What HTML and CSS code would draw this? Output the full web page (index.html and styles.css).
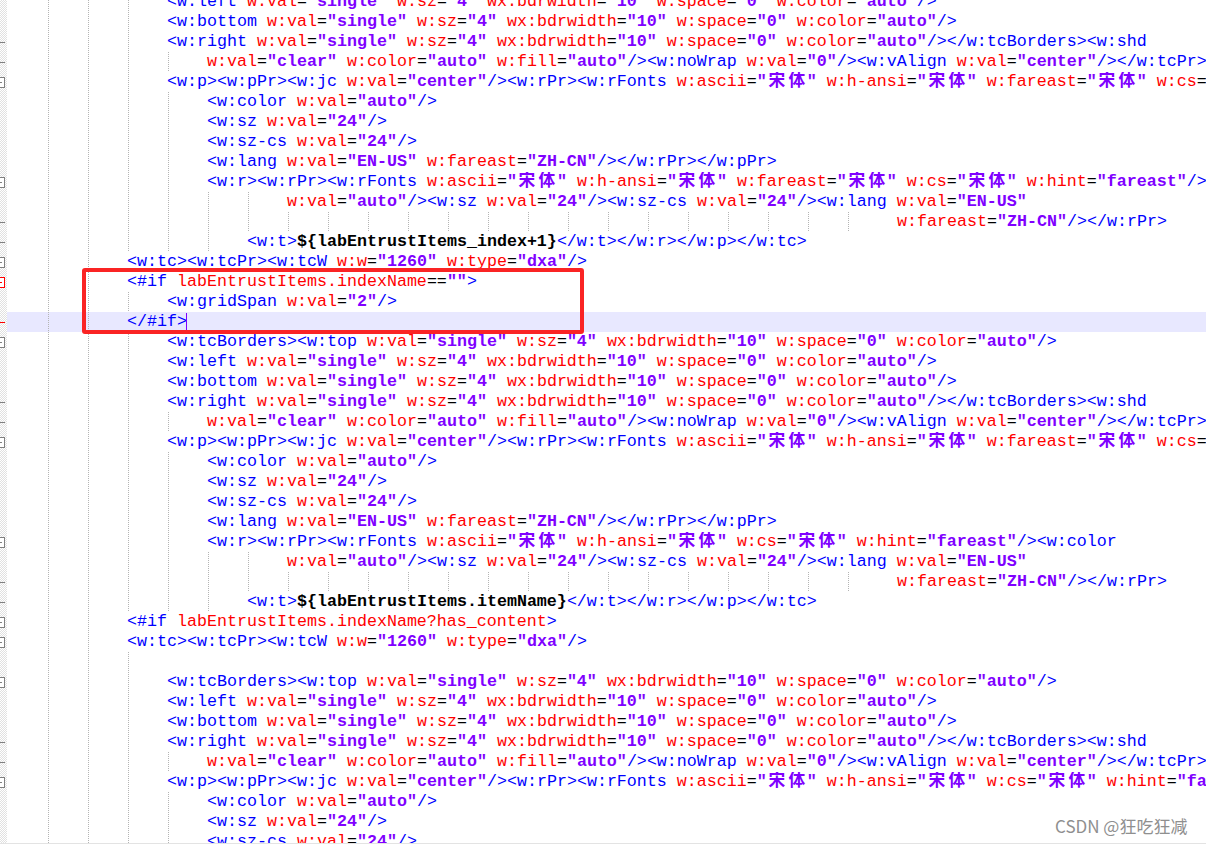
FILE: index.html
```html
<!DOCTYPE html>
<html lang="zh-CN">
<head>
    <meta charset="UTF-8">
    <title>template.ftl - Notepad++</title>
    <link rel="stylesheet" href="styles.css">
</head>
<body>
    <div class="editor">
        <div class="code" id="code"></div>
        <div class="mark"></div>
        <div class="watermark">CSDN @狂吃狂减</div>
    </div>

    <script>
        // [缩进列数, 内容, 折叠标记, 当前行]
        const lines = [
            [16, '<w:left w:val="single" w:sz="4" wx:bdrwidth="10" w:space="0" w:color="auto"/>', ''],
            [16, '<w:bottom w:val="single" w:sz="4" wx:bdrwidth="10" w:space="0" w:color="auto"/>', ''],
            [16, '<w:right w:val="single" w:sz="4" wx:bdrwidth="10" w:space="0" w:color="auto"/></w:tcBorders><w:shd', 'tick'],
            [20, 'w:val="clear" w:color="auto" w:fill="auto"/><w:noWrap w:val="0"/><w:vAlign w:val="center"/></w:tcPr>', 'tick'],
            [16, '<w:p><w:pPr><w:jc w:val="center"/><w:rPr><w:rFonts w:ascii="宋体" w:h-ansi="宋体" w:fareast="宋体" w:cs="宋体" w:hint="fareast"/>', 'box'],
            [20, '<w:color w:val="auto"/>', ''],
            [20, '<w:sz w:val="24"/>', ''],
            [20, '<w:sz-cs w:val="24"/>', ''],
            [20, '<w:lang w:val="EN-US" w:fareast="ZH-CN"/></w:rPr></w:pPr>', ''],
            [20, '<w:r><w:rPr><w:rFonts w:ascii="宋体" w:h-ansi="宋体" w:fareast="宋体" w:cs="宋体" w:hint="fareast"/><w:color', 'box'],
            [28, 'w:val="auto"/><w:sz w:val="24"/><w:sz-cs w:val="24"/><w:lang w:val="EN-US"', ''],
            [89, 'w:fareast="ZH-CN"/></w:rPr>', 'tick'],
            [24, '<w:t>${labEntrustItems_index+1}</w:t></w:r></w:p></w:tc>', 'tick'],
            [12, '<w:tc><w:tcPr><w:tcW w:w="1260" w:type="dxa"/>', 'box'],
            [12, '<#if labEntrustItems.indexName=="">', 'box red'],
            [16, '<w:gridSpan w:val="2"/>', ''],
            [12, '</#if>', 'tick red', true],
            [16, '<w:tcBorders><w:top w:val="single" w:sz="4" wx:bdrwidth="10" w:space="0" w:color="auto"/>', 'box'],
            [16, '<w:left w:val="single" w:sz="4" wx:bdrwidth="10" w:space="0" w:color="auto"/>', ''],
            [16, '<w:bottom w:val="single" w:sz="4" wx:bdrwidth="10" w:space="0" w:color="auto"/>', ''],
            [16, '<w:right w:val="single" w:sz="4" wx:bdrwidth="10" w:space="0" w:color="auto"/></w:tcBorders><w:shd', 'tick'],
            [20, 'w:val="clear" w:color="auto" w:fill="auto"/><w:noWrap w:val="0"/><w:vAlign w:val="center"/></w:tcPr>', 'tick'],
            [16, '<w:p><w:pPr><w:jc w:val="center"/><w:rPr><w:rFonts w:ascii="宋体" w:h-ansi="宋体" w:fareast="宋体" w:cs="宋体" w:hint="fareast"/>', 'box'],
            [20, '<w:color w:val="auto"/>', ''],
            [20, '<w:sz w:val="24"/>', ''],
            [20, '<w:sz-cs w:val="24"/>', ''],
            [20, '<w:lang w:val="EN-US" w:fareast="ZH-CN"/></w:rPr></w:pPr>', ''],
            [20, '<w:r><w:rPr><w:rFonts w:ascii="宋体" w:h-ansi="宋体" w:cs="宋体" w:hint="fareast"/><w:color', 'box'],
            [28, 'w:val="auto"/><w:sz w:val="24"/><w:sz-cs w:val="24"/><w:lang w:val="EN-US"', ''],
            [89, 'w:fareast="ZH-CN"/></w:rPr>', 'tick'],
            [24, '<w:t>${labEntrustItems.itemName}</w:t></w:r></w:p></w:tc>', 'tick'],
            [12, '<#if labEntrustItems.indexName?has_content>', 'box'],
            [12, '<w:tc><w:tcPr><w:tcW w:w="1260" w:type="dxa"/>', 'box'],
            [16, '', ''],
            [16, '<w:tcBorders><w:top w:val="single" w:sz="4" wx:bdrwidth="10" w:space="0" w:color="auto"/>', 'box'],
            [16, '<w:left w:val="single" w:sz="4" wx:bdrwidth="10" w:space="0" w:color="auto"/>', ''],
            [16, '<w:bottom w:val="single" w:sz="4" wx:bdrwidth="10" w:space="0" w:color="auto"/>', ''],
            [16, '<w:right w:val="single" w:sz="4" wx:bdrwidth="10" w:space="0" w:color="auto"/></w:tcBorders><w:shd', 'tick'],
            [20, 'w:val="clear" w:color="auto" w:fill="auto"/><w:noWrap w:val="0"/><w:vAlign w:val="center"/></w:tcPr>', 'tick'],
            [16, '<w:p><w:pPr><w:jc w:val="center"/><w:rPr><w:rFonts w:ascii="宋体" w:h-ansi="宋体" w:cs="宋体" w:hint="fareast"/>', 'box'],
            [20, '<w:color w:val="auto"/>', ''],
            [20, '<w:sz w:val="24"/>', ''],
            [20, '<w:sz-cs w:val="24"/>', '']
        ];

        function escape(s) {
            return s.replace(/&/g, '&amp;').replace(/</g, '&lt;').replace(/>/g, '&gt;')
                .replace(/[\u4e00-\u9fff]/g, c => `<span class="wide">${c}</span>`);
        }

        // 简单的 XML 着色
        function paint(src) {
            let out = '';
            let inTag = src.length > 0 && src[0] !== '<';
            let i = 0;
            const put = (cls, s) => {
                out += cls ? `<span class="${cls}">${escape(s)}</span>` : escape(s);
            };
            while (i < src.length) {
                const rest = src.slice(i);
                let m;
                if (!inTag) {
                    if ((m = rest.match(/^<\/?[#\w:.-]*/))) { put('tag', m[0]); inTag = true; }
                    else { m = rest.match(/^[^<]+/); put('txt', m[0]); }
                } else {
                    if ((m = rest.match(/^\s+/))) put('', m[0]);
                    else if ((m = rest.match(/^\/?>/))) { put('tag', m[0]); inTag = false; }
                    else if ((m = rest.match(/^"[^"]*"/))) put('val', m[0]);
                    else if ((m = rest.match(/^=+/))) put('', m[0]);
                    else { m = rest.match(/^[^\s="\/>]+/) || [rest[0]]; put('attr', m[0]); }
                }
                i += m[0].length;
            }
            return out;
        }

        function indent(n) {
            let s = '';
            for (let k = 0; k < Math.floor(n / 4); k++) {
                s += `<span class="ig${k ? ' guide' : ''}"></span>`;
            }
            return s + ' '.repeat(n % 4);
        }

        const code = document.getElementById('code');
        code.innerHTML = lines.map(([n, text, fold, current]) => `
            <div class="row${current ? ' current' : ''}">
                <div class="fold"><i class="${fold}"></i></div>
                <div class="src">${indent(n)}${paint(text)}${current ? '<span class="caret"></span>' : ''}</div>
            </div>`).join('');
    </script>
</body>
</html>
```

FILE: styles.css
```css
body {
    margin: 0;
    background: #fff;
    overflow: hidden;
}

.editor {
    position: relative;
    width: 1206px;
    height: 843px;
    border-bottom: 1px solid #e3e3e3;
    overflow: hidden;
    font-family: "Liberation Mono", "Noto Sans CJK SC", monospace;
    font-size: 16.667px;
}

.code {
    margin-top: -8px;
}

.row {
    display: flex;
    height: 20px;
    line-height: 20px;
}

.fold {
    flex: 0 0 7px;
    height: 20px;
    display: flex;
    align-items: center;
    overflow: hidden;
    background: repeating-conic-gradient(#e1e1e1 0 25%, #fff 0 50%) 0 0 / 2px 2px;
}

.fold .box {
    flex: none;
    width: 11px;
    height: 11px;
    margin-left: -6px;
    box-sizing: border-box;
    border: 1px solid #808080;
    background: linear-gradient(#808080, #808080) 2px 4px / 5px 1px no-repeat, #fff;
}

.fold .tick {
    flex: none;
    width: 5px;
    height: 1px;
    background: #808080;
}

.fold .box.red {
    border-color: #ff0000;
    background: linear-gradient(#ff0000, #ff0000) 2px 4px / 5px 1px no-repeat, #fff;
}

.fold .tick.red {
    background: #ff0000;
}

.src {
    flex: 1;
    white-space: pre;
    overflow: hidden;
    color: #000;
}

.row.current .src {
    background: #e8e8ff;
}

.ig {
    display: inline-block;
    width: 40px;
    height: 20px;
    vertical-align: top;
}

.guide {
    background: linear-gradient(#b4b4b4 50%, transparent 50%) 1px 0 / 1px 2px repeat-y;
}

.tag {
    color: #0000ff;
}

.attr {
    color: #ff0000;
}

.val {
    color: #8000ff;
    font-weight: bold;
}

.txt {
    font-weight: bold;
}

.wide {
    display: inline-block;
    width: 20px;
    text-align: center;
}

.caret {
    display: inline-block;
    width: 0;
    height: 18px;
    margin-top: 1px;
    margin-left: -1px;
    vertical-align: top;
    border-left: 1px solid #8000ff;
}

.mark {
    position: absolute;
    left: 82px;
    top: 268px;
    width: 502px;
    height: 66px;
    box-sizing: border-box;
    border: 4px solid #fa2424;
    border-radius: 3px;
}

.watermark {
    position: absolute;
    left: 1055px;
    top: 813px;
    font-family: "Noto Sans CJK SC", sans-serif;
    font-size: 17px;
    color: #8f8f8f;
}
```
